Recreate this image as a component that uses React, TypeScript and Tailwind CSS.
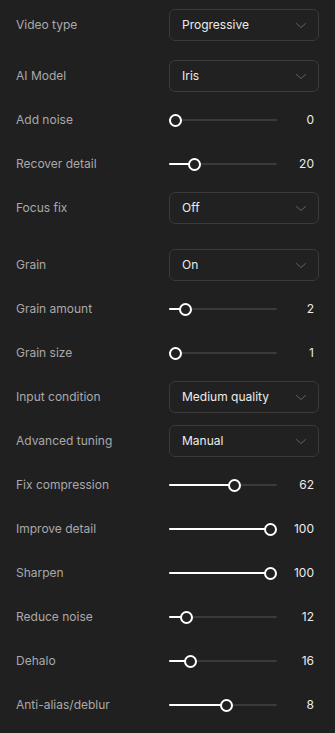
type Row =
  | { kind: "select"; label: string; value: string; gap?: string }
  | { kind: "slider"; label: string; value: number; pct: number; gap?: string };

const rows: Row[] = [
  { kind: "select", label: "Video type", value: "Progressive" },
  { kind: "select", label: "AI Model", value: "Iris", gap: "mt-[7px]" },
  { kind: "slider", label: "Add noise", value: 0, pct: 0 },
  { kind: "slider", label: "Recover detail", value: 20, pct: 20 },
  { kind: "select", label: "Focus fix", value: "Off" },
  { kind: "select", label: "Grain", value: "On", gap: "mt-[13px]" },
  { kind: "slider", label: "Grain amount", value: 2, pct: 10.5 },
  { kind: "slider", label: "Grain size", value: 1, pct: 0 },
  { kind: "select", label: "Input condition", value: "Medium quality" },
  { kind: "select", label: "Advanced tuning", value: "Manual" },
  { kind: "slider", label: "Fix compression", value: 62, pct: 62.5 },
  { kind: "slider", label: "Improve detail", value: 100, pct: 100 },
  { kind: "slider", label: "Sharpen", value: 100, pct: 100 },
  { kind: "slider", label: "Reduce noise", value: 12, pct: 11.5 },
  { kind: "slider", label: "Dehalo", value: 16, pct: 15.6 },
  { kind: "slider", label: "Anti-alias/deblur", value: 8, pct: 54 },
];

// thin chevron, dim grey like the reference
const Chevron = () => (
  <svg width="12" height="7" viewBox="0 0 12 7" fill="none" className="shrink-0">
    <path d="M1.5 1.5l4.5 4 4.5-4" stroke="#626262" strokeWidth="1" strokeLinecap="round" strokeLinejoin="round" />
  </svg>
);

const Select = ({ value }: { value: string }) => (
  <div className="flex h-8 w-[150px] items-center justify-between rounded-md border border-[#3a3a3a] bg-[#212121] pl-3 pr-[11px]">
    <span className="text-[12px] text-[#ececec]">{value}</span>
    <Chevron />
  </div>
);

const Slider = ({ value, pct }: { value: number; pct: number }) => (
  <div className="flex w-[150px] items-center">
    <div className="relative h-[13px] w-[108px]">
      <div className="absolute left-0 right-0 top-[5.5px] h-[2px] rounded-full bg-[#3a3a3a]" />
      <div
        className="absolute left-0 top-[5.5px] h-[2px] rounded-full bg-white"
        style={{ width: `calc(6.5px + ${pct} * 0.95px)` }}
      />
      <div
        className="absolute top-0 h-[13px] w-[13px] rounded-full border-2 border-white bg-[#212121]"
        style={{ left: `calc(${pct} * 0.95px)` }}
      />
    </div>
    <span className="flex-1 pr-[5px] text-right text-[12px] text-[#ececec]">{value}</span>
  </div>
);

export default function App() {
  return (
    <div
      className="min-h-screen bg-[#202020] px-4 pt-[3px]"
      style={{ fontFamily: "Inter, 'Noto Sans', sans-serif" }}
    >
      {rows.map((r) => (
        <div key={r.label} className={`flex h-11 items-center justify-between ${r.gap ?? ""}`}>
          <span className="text-[12px] text-[#a9a9a9]">{r.label}</span>
          {r.kind === "select" ? <Select value={r.value} /> : <Slider value={r.value} pct={r.pct} />}
        </div>
      ))}
    </div>
  );
}
